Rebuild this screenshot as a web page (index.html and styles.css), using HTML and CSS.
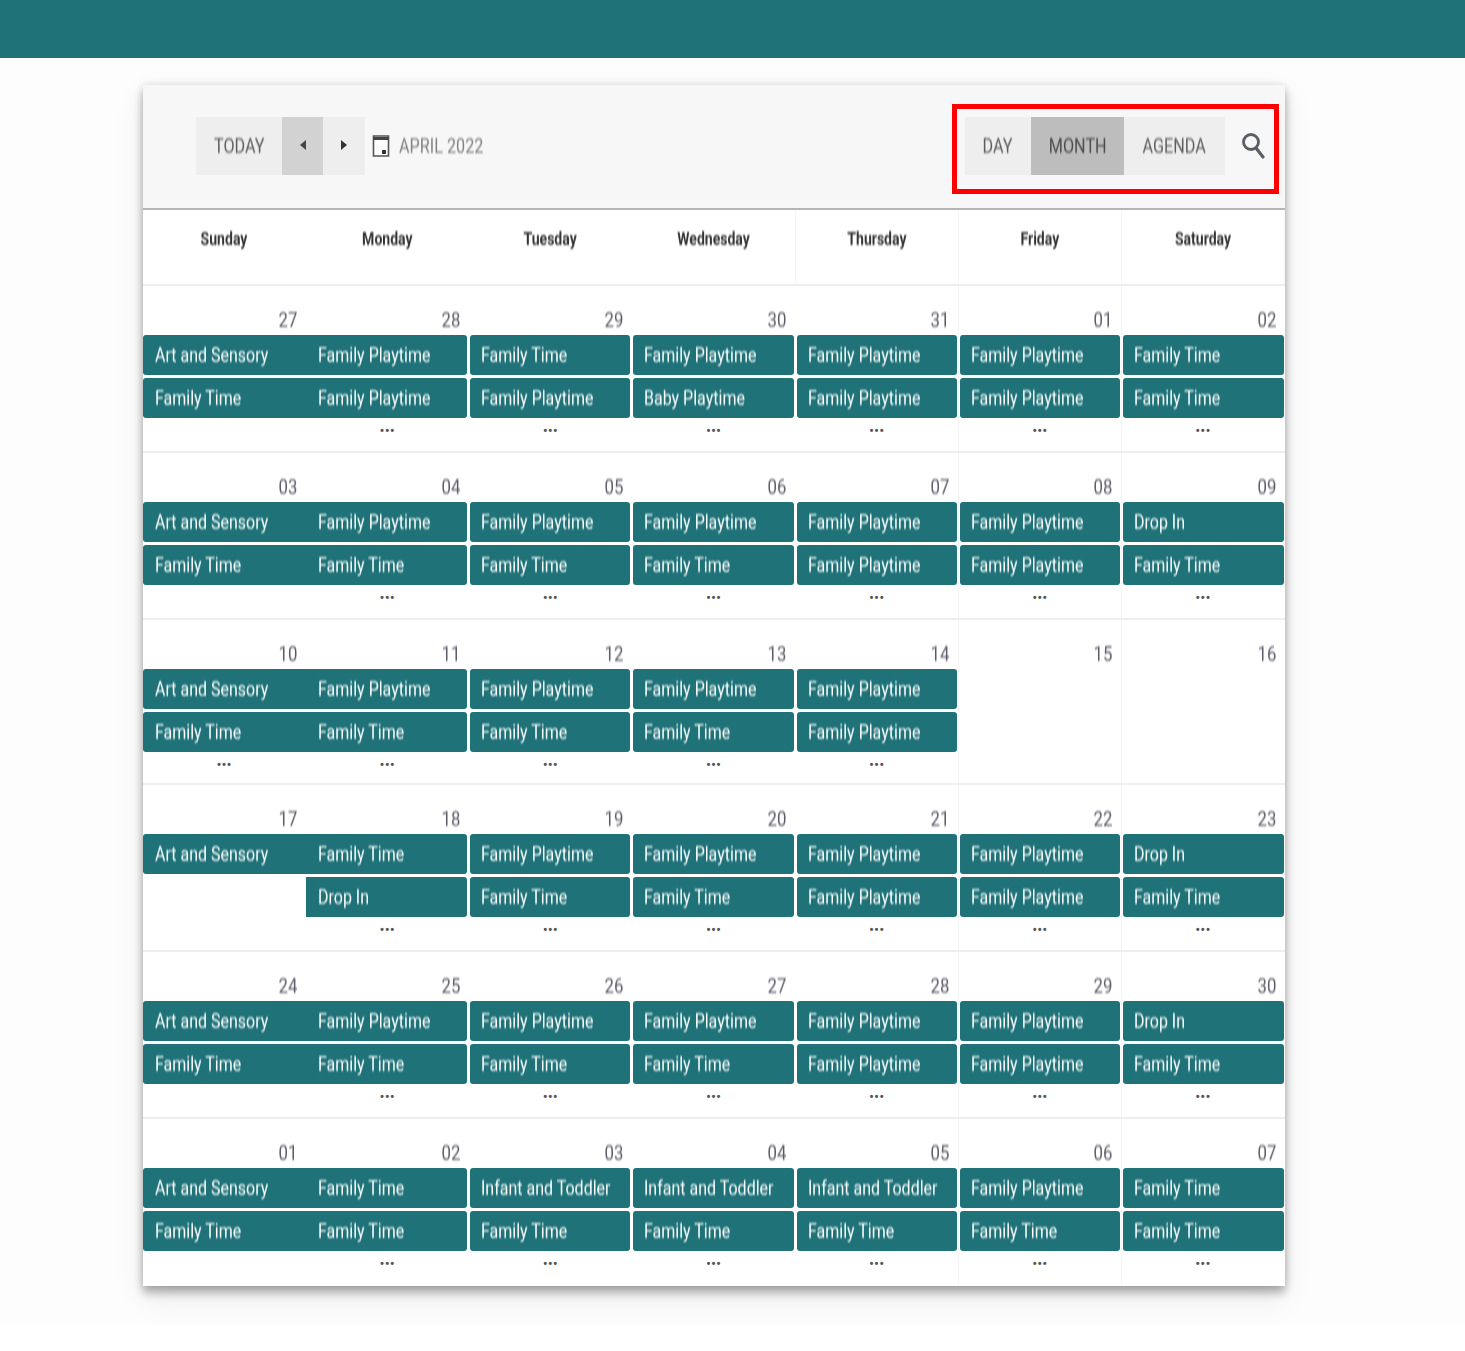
FILE: index.html
```html
<!DOCTYPE html>
<html lang="en">
<head>
    <meta charset="UTF-8">
    <meta name="viewport" content="width=device-width, initial-scale=1.0">
    <title>Calendar</title>
    <link rel="stylesheet" href="styles.css">
</head>
<body>
    <div class="topbar"></div>
    <div class="page">
        <div class="calendar">
            <div class="toolbar">
                <div class="btn-group">
                    <button class="btn btn-today"><span>TODAY</span></button>
                    <button class="btn btn-arrow btn-prev"><svg width="8" height="12" viewBox="0 0 8 12"><path d="M7 1V11L1 6z" fill="#444"/></svg></button>
                    <button class="btn btn-arrow btn-next"><svg width="8" height="12" viewBox="0 0 8 12"><path d="M1 1V11L7 6z" fill="#333"/></svg></button>
                </div>
                <svg class="cal-icon" width="18" height="24" viewBox="0 0 18 24"><path d="M1.500 2h15v20h-15z" fill="#fff" stroke="#555" stroke-width="1.600"/><path d="M1.500 3h15v3h-15z" fill="#444"/><path d="M10 16h4v4h-4z" fill="#333"/></svg>
                <span class="month-label"><span>APRIL 2022</span></span>
                <div class="toolbar-right">
                    <div class="btn-group">
                        <button class="btn btn-day"><span>DAY</span></button>
                        <button class="btn btn-month"><span>MONTH</span></button>
                        <button class="btn btn-agenda"><span>AGENDA</span></button>
                    </div>
                    <svg class="search-icon" width="24" height="30" viewBox="0 0 24 30"><circle cx="10" cy="11" r="7.500" fill="none" stroke="#5a5f66" stroke-width="2.800"/><path d="M15 17l7 9" stroke="#5a5f66" stroke-width="3.200" stroke-linecap="round"/></svg>
                </div>
                <div class="highlight"></div>
            </div>

            <div class="weekdays">
                <div class="weekday"><span>Sunday</span></div>
                <div class="weekday"><span>Monday</span></div>
                <div class="weekday"><span>Tuesday</span></div>
                <div class="weekday"><span>Wednesday</span></div>
                <div class="weekday"><span>Thursday</span></div>
                <div class="weekday"><span>Friday</span></div>
                <div class="weekday"><span>Saturday</span></div>
            </div>

            <div class="week">
                <div class="day"><div class="date"><span>27</span></div><div class="event"><span>Art and Sensory</span></div><div class="event"><span>Family Time</span></div></div>
                <div class="day"><div class="date"><span>28</span></div><div class="event"><span>Family Playtime</span></div><div class="event"><span>Family Playtime</span></div><div class="more">•••</div></div>
                <div class="day"><div class="date"><span>29</span></div><div class="event"><span>Family Time</span></div><div class="event"><span>Family Playtime</span></div><div class="more">•••</div></div>
                <div class="day"><div class="date"><span>30</span></div><div class="event"><span>Family Playtime</span></div><div class="event"><span>Baby Playtime</span></div><div class="more">•••</div></div>
                <div class="day"><div class="date"><span>31</span></div><div class="event"><span>Family Playtime</span></div><div class="event"><span>Family Playtime</span></div><div class="more">•••</div></div>
                <div class="day"><div class="date"><span>01</span></div><div class="event"><span>Family Playtime</span></div><div class="event"><span>Family Playtime</span></div><div class="more">•••</div></div>
                <div class="day"><div class="date"><span>02</span></div><div class="event"><span>Family Time</span></div><div class="event"><span>Family Time</span></div><div class="more">•••</div></div>
            </div>

            <div class="week">
                <div class="day"><div class="date"><span>03</span></div><div class="event"><span>Art and Sensory</span></div><div class="event"><span>Family Time</span></div></div>
                <div class="day"><div class="date"><span>04</span></div><div class="event"><span>Family Playtime</span></div><div class="event"><span>Family Time</span></div><div class="more">•••</div></div>
                <div class="day"><div class="date"><span>05</span></div><div class="event"><span>Family Playtime</span></div><div class="event"><span>Family Time</span></div><div class="more">•••</div></div>
                <div class="day"><div class="date"><span>06</span></div><div class="event"><span>Family Playtime</span></div><div class="event"><span>Family Time</span></div><div class="more">•••</div></div>
                <div class="day"><div class="date"><span>07</span></div><div class="event"><span>Family Playtime</span></div><div class="event"><span>Family Playtime</span></div><div class="more">•••</div></div>
                <div class="day"><div class="date"><span>08</span></div><div class="event"><span>Family Playtime</span></div><div class="event"><span>Family Playtime</span></div><div class="more">•••</div></div>
                <div class="day"><div class="date"><span>09</span></div><div class="event"><span>Drop In</span></div><div class="event"><span>Family Time</span></div><div class="more">•••</div></div>
            </div>

            <div class="week week-short">
                <div class="day"><div class="date"><span>10</span></div><div class="event"><span>Art and Sensory</span></div><div class="event"><span>Family Time</span></div><div class="more">•••</div></div>
                <div class="day"><div class="date"><span>11</span></div><div class="event"><span>Family Playtime</span></div><div class="event"><span>Family Time</span></div><div class="more">•••</div></div>
                <div class="day"><div class="date"><span>12</span></div><div class="event"><span>Family Playtime</span></div><div class="event"><span>Family Time</span></div><div class="more">•••</div></div>
                <div class="day"><div class="date"><span>13</span></div><div class="event"><span>Family Playtime</span></div><div class="event"><span>Family Time</span></div><div class="more">•••</div></div>
                <div class="day"><div class="date"><span>14</span></div><div class="event"><span>Family Playtime</span></div><div class="event"><span>Family Playtime</span></div><div class="more">•••</div></div>
                <div class="day"><div class="date"><span>15</span></div></div>
                <div class="day"><div class="date"><span>16</span></div></div>
            </div>

            <div class="week">
                <div class="day"><div class="date"><span>17</span></div><div class="event"><span>Art and Sensory</span></div></div>
                <div class="day"><div class="date"><span>18</span></div><div class="event"><span>Family Time</span></div><div class="event"><span>Drop In</span></div><div class="more">•••</div></div>
                <div class="day"><div class="date"><span>19</span></div><div class="event"><span>Family Playtime</span></div><div class="event"><span>Family Time</span></div><div class="more">•••</div></div>
                <div class="day"><div class="date"><span>20</span></div><div class="event"><span>Family Playtime</span></div><div class="event"><span>Family Time</span></div><div class="more">•••</div></div>
                <div class="day"><div class="date"><span>21</span></div><div class="event"><span>Family Playtime</span></div><div class="event"><span>Family Playtime</span></div><div class="more">•••</div></div>
                <div class="day"><div class="date"><span>22</span></div><div class="event"><span>Family Playtime</span></div><div class="event"><span>Family Playtime</span></div><div class="more">•••</div></div>
                <div class="day"><div class="date"><span>23</span></div><div class="event"><span>Drop In</span></div><div class="event"><span>Family Time</span></div><div class="more">•••</div></div>
            </div>

            <div class="week">
                <div class="day"><div class="date"><span>24</span></div><div class="event"><span>Art and Sensory</span></div><div class="event"><span>Family Time</span></div></div>
                <div class="day"><div class="date"><span>25</span></div><div class="event"><span>Family Playtime</span></div><div class="event"><span>Family Time</span></div><div class="more">•••</div></div>
                <div class="day"><div class="date"><span>26</span></div><div class="event"><span>Family Playtime</span></div><div class="event"><span>Family Time</span></div><div class="more">•••</div></div>
                <div class="day"><div class="date"><span>27</span></div><div class="event"><span>Family Playtime</span></div><div class="event"><span>Family Time</span></div><div class="more">•••</div></div>
                <div class="day"><div class="date"><span>28</span></div><div class="event"><span>Family Playtime</span></div><div class="event"><span>Family Playtime</span></div><div class="more">•••</div></div>
                <div class="day"><div class="date"><span>29</span></div><div class="event"><span>Family Playtime</span></div><div class="event"><span>Family Playtime</span></div><div class="more">•••</div></div>
                <div class="day"><div class="date"><span>30</span></div><div class="event"><span>Drop In</span></div><div class="event"><span>Family Time</span></div><div class="more">•••</div></div>
            </div>

            <div class="week">
                <div class="day"><div class="date"><span>01</span></div><div class="event"><span>Art and Sensory</span></div><div class="event"><span>Family Time</span></div></div>
                <div class="day"><div class="date"><span>02</span></div><div class="event"><span>Family Time</span></div><div class="event"><span>Family Time</span></div><div class="more">•••</div></div>
                <div class="day"><div class="date"><span>03</span></div><div class="event"><span>Infant and Toddler</span></div><div class="event"><span>Family Time</span></div><div class="more">•••</div></div>
                <div class="day"><div class="date"><span>04</span></div><div class="event"><span>Infant and Toddler</span></div><div class="event"><span>Family Time</span></div><div class="more">•••</div></div>
                <div class="day"><div class="date"><span>05</span></div><div class="event"><span>Infant and Toddler</span></div><div class="event"><span>Family Time</span></div><div class="more">•••</div></div>
                <div class="day"><div class="date"><span>06</span></div><div class="event"><span>Family Playtime</span></div><div class="event"><span>Family Time</span></div><div class="more">•••</div></div>
                <div class="day"><div class="date"><span>07</span></div><div class="event"><span>Family Time</span></div><div class="event"><span>Family Time</span></div><div class="more">•••</div></div>
            </div>
        </div>
    </div>
</body>
</html>
```

FILE: styles.css
```css
* {
    box-sizing: border-box;
}

body {
    margin: 0;
    background-color: #fff;
    font-family: Roboto, sans-serif;
}

.topbar {
    height: 58px;
    background-color: #1e7278;
}

.page {
    height: 1267px;
    padding: 27px 0 0 143px;
    background-color: #fdfdfd;
    overflow: hidden;
}

.calendar {
    width: 1142px;
    height: 1201px;
    background-color: #fff;
    box-shadow: 0 7px 9px rgba(0, 0, 0, 0.28), 0 12px 30px rgba(0, 0, 0, 0.08), 0 0 8px rgba(0, 0, 0, 0.12);
}

/* the source image is a blurred, squeezed upscale, so labels get the same treatment */
.btn span,
.month-label span,
.weekday span,
.date span,
.event span {
    display: inline-block;
    transform: scaleX(0.81);
    filter: blur(0.9px);
}

.toolbar {
    position: relative;
    display: flex;
    align-items: center;
    height: 125px;
    padding: 0 20px 2px 53px;
    background-color: #f7f7f7;
    border-bottom: 2px solid #b5b5b5;
}

.btn-group {
    display: flex;
    height: 58px;
}

.btn {
    border: none;
    padding: 0;
    font-family: Roboto, sans-serif;
    font-size: 20px;
    color: #5c5c5c;
    background-color: #eee;
}

.btn-today {
    width: 86px;
}

.btn-arrow {
    display: flex;
    align-items: center;
    justify-content: center;
    padding-bottom: 2px;
}

.btn-prev {
    width: 41px;
    background-color: #d2d2d2;
}

.btn-next {
    width: 42px;
}

.cal-icon {
    margin-left: 7px;
}

.month-label {
    margin-left: 9px;
    font-size: 20px;
    color: #808080;
}

.month-label span {
    transform-origin: left center;
}

.toolbar-right {
    display: flex;
    align-items: center;
    gap: 16px;
    margin-left: auto;
}

.btn-day {
    width: 66px;
}

.btn-month {
    width: 93px;
    background-color: #bdbdbd;
    color: #4a4a4a;
}

.btn-agenda {
    width: 101px;
}

.highlight {
    position: absolute;
    left: 809px;
    top: 19px;
    width: 327px;
    height: 90px;
    border: 5px solid #f00;
}

.weekdays,
.week {
    display: grid;
    grid-template-columns: repeat(7, minmax(0, 1fr));
}

.weekdays {
    height: 74px;
}

.weekday {
    padding-top: 18px;
    text-align: center;
    font-size: 18px;
    font-weight: 700;
    color: #333;
    border-right: 1px solid #f6f6f6;
}

.weekday:nth-child(-n+3) {
    border-right-color: transparent;
}

.weekday span {
    transform: scaleX(0.78);
}

.week {
    height: 167px;
    border-top: 2px solid #eee;
}

.week-short {
    height: 165px;
}

.day {
    border-right: 1px solid #f4f4f4;
}

.day:nth-child(-n+4),
.day:last-child {
    border-right-color: transparent;
}

.date {
    height: 49px;
    padding: 22px 8px 0 0;
    text-align: right;
    font-size: 20px;
    line-height: 24px;
    color: #5a5a68;
}

.date span {
    transform: scaleX(0.84);
    transform-origin: right center;
}

.event {
    height: 40px;
    margin: 0 1px 3px 0;
    padding-left: 12px;
    border-radius: 0 3px 3px 0;
    background-color: #1e7278;
    color: #fff;
    font-size: 20px;
    line-height: 40px;
    white-space: nowrap;
    overflow: hidden;
}

.event span {
    transform: scaleX(0.8);
    transform-origin: left center;
}

.day:first-child .event {
    margin-right: -1px;
    border-radius: 3px 0 0 3px;
}

.day:nth-child(n+3) .event {
    margin-left: 1px;
    padding-left: 11px;
    border-radius: 3px;
}

.day:last-child .event {
    margin-right: 0;
}

.more {
    margin-top: 5px;
    text-align: center;
    font-size: 15px;
    line-height: 16px;
    color: #555;
}
```
